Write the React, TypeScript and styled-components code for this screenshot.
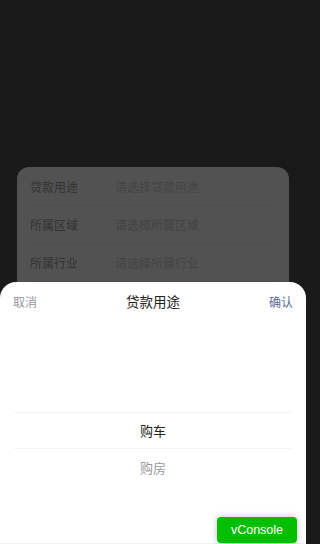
import styled, { createGlobalStyle } from "styled-components";

// Global reset
const GlobalStyle = createGlobalStyle`
    html, body, #root {
        margin: 0;
        padding: 0;
        height: 100%;
    }
    body {
        font-family: "Noto Sans CJK SC", "Noto Sans", sans-serif;
        background: #1a1a1a;
    }
`;

// Page behind the overlay
const Page = styled.div`
    position: relative;
    width: 306px;
    height: 544px;
    overflow: hidden;
    background: #1a1a1a;
    padding-top: 167px;
    box-sizing: border-box;
`;

const FormCard = styled.div`
    margin: 0 17px;
    background: #525252;
    border-radius: 12px;
    overflow: hidden;
`;

const FormRow = styled.div`
    display: flex;
    align-items: center;
    height: 38px;
    padding: 0 13px;
    font-size: 12px;
    position: relative;
    & + &::before {
        content: "";
        position: absolute;
        top: 0;
        left: 13px;
        right: 13px;
        border-top: 1px solid #4e4e4e;
    }
`;

const RowLabel = styled.span`
    width: 85px;
    color: #333;
`;

const RowValue = styled.span`
    color: #444;
`;

// Bottom popup with the picker
const Sheet = styled.div`
    position: absolute;
    left: 0;
    right: 0;
    bottom: 0;
    height: 262px;
    background: #fff;
    border-radius: 16px 16px 0 0;
    display: flex;
    flex-direction: column;
`;

const SheetHeader = styled.div`
    display: flex;
    align-items: center;
    justify-content: space-between;
    height: 38px;
    padding: 0 13px;
`;

const HeaderButton = styled.span<{ $confirm?: boolean }>`
    font-size: 12px;
    color: ${(p) => (p.$confirm ? "#576b95" : "#969799")};
`;

const HeaderTitle = styled.span`
    font-size: 13.5px;
    color: #222;
`;

const PickerColumn = styled.div`
    position: relative;
    height: 222px;
    padding-top: 92px;
    box-sizing: border-box;
`;

const SelectFrame = styled.div`
    position: absolute;
    left: 14px;
    right: 14px;
    top: 92px;
    height: 37px;
    border-top: 1px solid #f3f3f3;
    border-bottom: 1px solid #f3f3f3;
    box-sizing: border-box;
`;

const PickerItem = styled.div<{ $active?: boolean }>`
    height: 37px;
    display: flex;
    align-items: center;
    justify-content: center;
    font-size: 13px;
    color: ${(p) => (p.$active ? "#222" : "#9a9a9a")};
`;

const SheetFoot = styled.div`
    flex: 1;
    border-bottom: 1px solid #f2f2f2;
`;

const VConsoleButton = styled.div`
    position: absolute;
    right: 9px;
    bottom: 1px;
    width: 80px;
    height: 26px;
    border-radius: 4px;
    background: #04be02;
    box-shadow: 0 0 6px rgba(0, 0, 0, 0.25);
    color: #fff;
    font-family: "Liberation Sans", Arial, sans-serif;
    font-size: 12.5px;
    display: flex;
    align-items: center;
    justify-content: center;
`;

const rows = [
    { label: "贷款用途", placeholder: "请选择贷款用途" },
    { label: "所属区域", placeholder: "请选择所属区域" },
    { label: "所属行业", placeholder: "请选择所属行业" },
];

export default function App() {
    return (
        <>
            <GlobalStyle />
            <Page>
                <FormCard>
                    {rows.map((r) => (
                        <FormRow key={r.label}>
                            <RowLabel>{r.label}</RowLabel>
                            <RowValue>{r.placeholder}</RowValue>
                        </FormRow>
                    ))}
                    <FormRow />
                </FormCard>

                <Sheet>
                    <SheetHeader>
                        <HeaderButton>取消</HeaderButton>
                        <HeaderTitle>贷款用途</HeaderTitle>
                        <HeaderButton $confirm>确认</HeaderButton>
                    </SheetHeader>
                    <PickerColumn>
                        <SelectFrame />
                        <PickerItem $active>购车</PickerItem>
                        <PickerItem>购房</PickerItem>
                    </PickerColumn>
                    <SheetFoot />
                </Sheet>

                <VConsoleButton>vConsole</VConsoleButton>
            </Page>
        </>
    );
}
